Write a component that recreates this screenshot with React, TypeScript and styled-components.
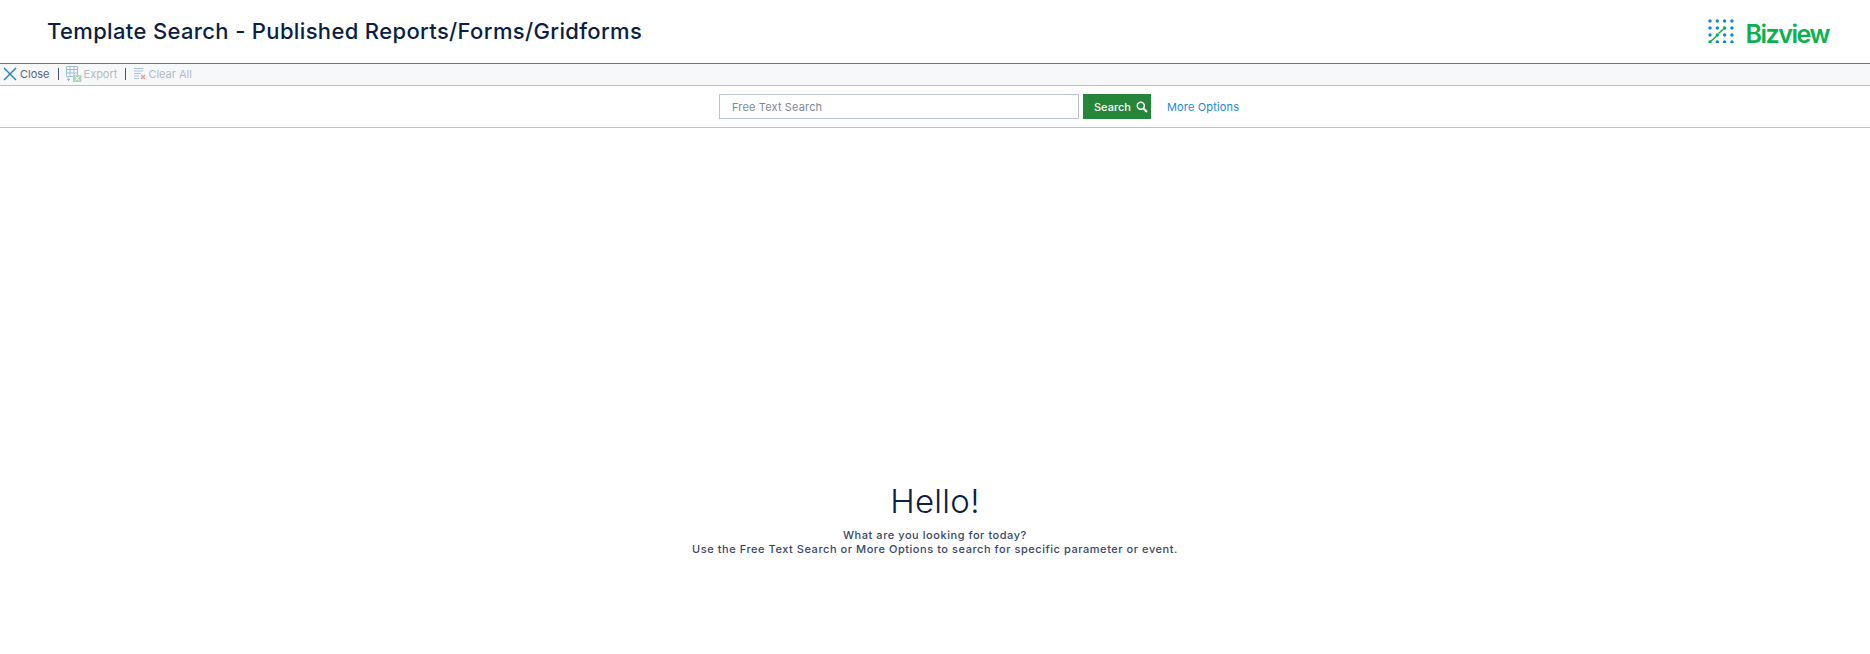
import React from "react";
import styled, { createGlobalStyle } from "styled-components";

const Global = createGlobalStyle`
  html, body { margin: 0; padding: 0; background: #fff; }
  body { font-family: Inter, "Liberation Sans", sans-serif; color: #0b1f45; }
`;
const Page = styled.div`
  width: 1870px; height: 654px; display: flex; flex-direction: column; overflow: hidden; background: #fff;
`;
const Header = styled.header`
  height: 64px; flex: none; box-sizing: border-box; display: flex; align-items: center; justify-content: space-between;
  padding: 0 41px 0 47px; border-bottom: 1px solid #4a7fc0;
`;
const Title = styled.h1`
  margin: 0 0 1px; font-size: 22px; font-weight: 500; color: #0b1f45; letter-spacing: 0.35px;
`;
const Logo = styled.div`
  display: flex; align-items: flex-start; gap: 11px; padding-top: 2px;
`;
const LogoText = styled.span`
  font-family: Inter, sans-serif; font-size: 25px; line-height: 24px; margin-top: 3px; font-weight: 600; color: #0bb14f; letter-spacing: -1.45px;
`;
const Toolbar = styled.div`
  height: 22px; flex: none; box-sizing: border-box; display: flex; align-items: center; background: #f6f8fa;
  border-bottom: 1px solid #b9c2d0; padding: 0 0 1px 3px; font-size: 11px;
`;
const ToolButton = styled.span<{ $disabled?: boolean; $gap: number }>`
  display: inline-flex; align-items: center; gap: ${(p) => p.$gap}px; color: ${(p) => (p.$disabled ? "#b3bac6" : "#56647e")};
`;
const Sep = styled.span<{ $left: number; $right: number }>`
  width: 1px; height: 12px; background: #46536b; margin: 0 ${(p) => p.$right}px 0 ${(p) => p.$left}px;
`;
const SearchRow = styled.div`
  height: 42px; flex: none; box-sizing: border-box; display: flex; align-items: center; justify-content: flex-start;
  border-bottom: 1px solid #b9c2d0; padding-left: 719px;
`;
const Input = styled.input`
  box-sizing: border-box; width: 360px; height: 25px; border: 1px solid #b9c5d6; padding: 0 12px; font: 400 11px Inter, sans-serif;
  letter-spacing: 0.15px; outline: none; background: #fff;
  &::placeholder { color: #7e8899; opacity: 1; }
`;
const SearchButton = styled.button`
  box-sizing: border-box; width: 68px; height: 25px; margin-left: 4px; background: #258539; border: 0; color: #fff;
  display: inline-flex; align-items: center; justify-content: flex-start; gap: 5px; font: 500 11px Inter, sans-serif; padding: 1px 0 0 11px;
`;
const MoreLink = styled.a`
  margin-left: 16px; font-size: 11px; color: #1e88d0; letter-spacing: 0.15px;
`;
const Main = styled.main`
  flex: 1; display: flex; flex-direction: column; align-items: center; padding-top: 351px;
`;
const Hello = styled.h2`
  margin: 0; font-size: 33px; line-height: 44px; font-weight: 300; color: #0b2145; letter-spacing: 0.3px;
`;
const Message = styled.p`
  margin: 5px 0 0; font-size: 11px; line-height: 14px; font-weight: 500; color: #3a4866; text-align: center; letter-spacing: 0.55px;
`;

const dots: [number, number][] = [];
for (let r = 0; r < 4; r++) for (let c = 0; c < 4; c++) dots.push([c, r]);
const isGreen = (c: number, r: number) => (c === 0 && r === 3) || (c === 1 && r === 2) || (c === 2 && r === 1);

const LogoMark = () => (
  <svg width="26" height="24" viewBox="0 0 26 24">
    {dots.map(([c, r]) => (
      <circle key={`${c}-${r}`} cx={2 + c * 7.3} cy={2 + r * 7} r={1.7} fill={isGreen(c, r) ? "#0bb14f" : "#1a7fd6"} />
    ))}
    <path d="M2 23 L8.5 17 M10.5 14.5 L16.5 9" stroke="#0bb14f" strokeWidth="1.5" fill="none" />
  </svg>
);

const CloseIcon = () => (
  <svg width="14" height="14" viewBox="0 0 14 14">
    <path d="M1 1 L13 13 M13 1 L1 13" stroke="#1b7fc4" strokeWidth="1.4" fill="none" />
  </svg>
);
const ExportIcon = () => (
  <svg width="16" height="16" viewBox="0 0 16 16">
    <path d="M.5.5h11v10H.5zM.5 3.5h11M.5 7h11M4 .5v10M8 .5v10" stroke="#a4bfdc" fill="none" />
    <path d="M2 11.5v2h2M3 15l-1.5-1.5" stroke="#8fb5de" fill="none" />
    <rect x="7" y="9" width="8.5" height="7" fill="#add8ba" />
    <path d="M9.5 10.5l3.5 4M13 10.5l-3.5 4" stroke="#fff" />
  </svg>
);
const ClearIcon = () => (
  <svg width="12" height="12" viewBox="0 0 12 12">
    <path d="M0 .5h9M0 3h9M0 5.5h7M0 8h5M0 10.5h5" stroke="#a9c4de" />
    <path d="M7 7l4 4M11 7l-4 4" stroke="#ec9a90" strokeWidth="1.3" />
  </svg>
);
const SearchIcon = () => (
  <svg width="12" height="12" viewBox="0 0 12 12">
    <circle cx="4.8" cy="4.8" r="3.5" stroke="#fff" strokeWidth="1.5" fill="none" />
    <path d="M7.5 7.5L11 11" stroke="#fff" strokeWidth="2" />
  </svg>
);

export default function App() {
  return (
    <>
      <Global />
      <Page>
        <Header>
          <Title>Template Search - Published Reports/Forms/Gridforms</Title>
          <Logo>
            <LogoMark />
            <LogoText>Bizview</LogoText>
          </Logo>
        </Header>
        <Toolbar>
          <ToolButton $gap={3}><CloseIcon />Close</ToolButton>
          <Sep $left={8} $right={7} />
          <ToolButton $disabled $gap={2}><ExportIcon />Export</ToolButton>
          <Sep $left={8} $right={8} />
          <ToolButton $disabled $gap={2}><ClearIcon />Clear All</ToolButton>
        </Toolbar>
        <SearchRow>
          <Input placeholder="Free Text Search" />
          <SearchButton>Search <SearchIcon /></SearchButton>
          <MoreLink>More Options</MoreLink>
        </SearchRow>
        <Main>
          <Hello>Hello!</Hello>
          <Message>
            What are you looking for today?<br />
            Use the Free Text Search or More Options to search for specific parameter or event.
          </Message>
        </Main>
      </Page>
    </>
  );
}
